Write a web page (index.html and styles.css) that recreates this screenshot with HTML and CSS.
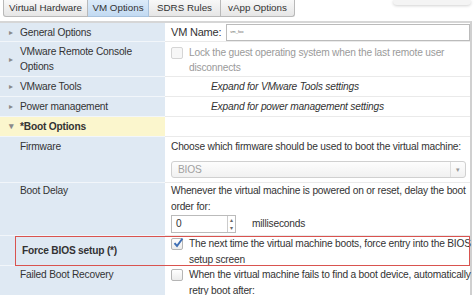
FILE: index.html
```html
<!DOCTYPE html>
<html lang="en">
<head>
    <meta charset="UTF-8">
    <title>VM Options</title>
    <link rel="stylesheet" href="styles.css">
</head>
<body>
    <div class="topbar">
        <div class="tabs">
            <div class="tab hw">Virtual Hardware</div>
            <div class="tab vm active">VM Options</div>
            <div class="tab sdrs">SDRS Rules</div>
            <div class="tab vapp">vApp Options</div>
        </div>
        <div class="ghost-btn"></div>
    </div>

    <div class="options">
        <div class="row h19">
            <div class="label"><span class="arrow">&#9656;</span>General Options</div>
            <div class="value inline">
                <span class="vm-label">VM Name:</span>
                <div class="text-input"><span class="tiny">vm_foo</span></div>
            </div>
        </div>

        <div class="row h35">
            <div class="label"><span class="arrow">&#9656;</span>VMware Remote Console<br>Options</div>
            <div class="value check-row disabled">
                <span class="checkbox"></span>
                <span>Lock the guest operating system when the last remote user<br>disconnects</span>
            </div>
        </div>

        <div class="row h20">
            <div class="label"><span class="arrow">&#9656;</span>VMware Tools</div>
            <div class="value hint">Expand for VMware Tools settings</div>
        </div>

        <div class="row h20">
            <div class="label"><span class="arrow">&#9656;</span>Power management</div>
            <div class="value hint">Expand for power management settings</div>
        </div>

        <div class="row h20 section">
            <div class="label"><span class="arrow down">&#9662;</span>*Boot Options</div>
            <div class="value"></div>
        </div>

        <div class="row firmware">
            <div class="label sub">Firmware</div>
            <div class="value">
                <div class="line">Choose which firmware should be used to boot the virtual machine:</div>
                <div class="select">
                    <span>BIOS</span>
                    <span class="caret">&#9662;</span>
                </div>
            </div>
        </div>

        <div class="row delay-row">
            <div class="label sub">Boot Delay</div>
            <div class="value">
                <div class="line">Whenever the virtual machine is powered on or reset, delay the boot<br>order for:</div>
                <div class="delay">
                    <div class="spin-input">
                        <span>0</span>
                        <div class="spinner">
                            <span>&#9652;</span>
                            <span>&#9662;</span>
                        </div>
                    </div>
                    <span>milliseconds</span>
                </div>
            </div>
        </div>

        <div class="row flagged">
            <div class="label sub strong">Force BIOS setup (*)</div>
            <div class="value check-row">
                <span class="checkbox checked">
                    <svg width="12" height="12" viewBox="0 0 12 12"><path d="M2.5 6.2 L5 9 L10.5 1.5" fill="none" stroke="#3f6fb5" stroke-width="2"/></svg>
                </span>
                <span>The next time the virtual machine boots, force entry into the BIOS<br>setup screen</span>
            </div>
        </div>

        <div class="row recovery">
            <div class="label sub">Failed Boot Recovery</div>
            <div class="value check-row">
                <span class="checkbox"></span>
                <span>When the virtual machine fails to find a boot device, automatically<br>retry boot after:</span>
            </div>
        </div>
    </div>
</body>
</html>
```

FILE: styles.css
```css
* {
    box-sizing: border-box;
}

body {
    margin: 0;
    font-family: 'Liberation Sans', Arial, sans-serif;
    font-size: 10.2px;
    letter-spacing: -0.2px;
    color: #333;
    background-color: #fff;
    overflow: hidden;
}

.topbar {
    display: flex;
    justify-content: space-between;
    height: 21px;
}

.tabs {
    display: flex;
    padding-left: 3px;
    height: 17px;
}

.tab {
    line-height: 16px;
    font-size: 9.8px;
    letter-spacing: 0;
    white-space: nowrap;
    text-align: center;
    border: 1px solid #b9b9b9;
    border-top: none;
    border-left: none;
    background: linear-gradient(#f8f8f8, #e6e6e6);
}

.hw {
    width: 85px;
    border-left: 1px solid #b9b9b9;
    border-radius: 0 0 0 3px;
}

.vm { width: 61px; }
.sdrs { width: 72px; }

.vapp {
    width: 74px;
    border-radius: 0 0 3px 0;
}

.tab.active {
    background: linear-gradient(#dcebf9, #c2daf2);
    border-color: #a9c3dd;
}

.ghost-btn {
    width: 78px;
    height: 5px;
    margin-right: 3px;
    background-color: #f4f4f4;
    border-radius: 0 0 4px 4px;
    box-shadow: 0 1px 3px rgba(0, 0, 0, 0.18);
}

.options {
    border-top: 2px solid #d6d6d6;
    border-right: 2px solid #d0d0d0;
    margin-right: 2px;
}

.row {
    display: flex;
    border-bottom: 1px solid #eaeaea;
    position: relative;
}

.label {
    width: 165px;
    flex-shrink: 0;
    padding: 0 0 0 20px;
    background-color: #dfe9f3;
    border-bottom: 1px solid #f2f6fa;
    margin-bottom: -1px;
    line-height: 15px;
    position: relative;
}

.arrow {
    position: absolute;
    left: 9px;
    font-size: 8px;
    color: #8a8a8a;
}

.arrow.down {
    font-size: 9px;
}

.h19 .label, .h20 .label, .h35 .label {
    display: flex;
    align-items: center;
}

.h19 { height: 19px; }
.h20 { height: 20px; }
.h35 { height: 35px; }

.section .label {
    background-color: #fbf6cd;
    font-weight: bold;
}

.sub {
    line-height: 16px;
}

.firmware .sub {
    padding-top: 2px;
}

.recovery .sub {
    padding-top: 1px;
}

.strong {
    font-weight: bold;
    padding-left: 22px;
    display: flex;
    align-items: center;
}

.value {
    flex: 1;
    padding: 0 0 0 6px;
    line-height: 16px;
    white-space: nowrap;
}

.firmware .value {
    padding-top: 2px;
}

.recovery .value {
    padding-top: 1px;
}

.value.inline {
    display: flex;
    align-items: center;
    padding: 0 0 0 6px;
    gap: 5px;
}

.vm-label {
    font-size: 11px;
}

.text-input {
    flex: 1;
    height: 17px;
    border: 1px solid #bbb;
    display: flex;
    align-items: center;
    padding-left: 3px;
}

.tiny {
    font-size: 4px;
    letter-spacing: 0;
    color: #666;
}

.hint {
    font-style: italic;
    padding-left: 46px;
    display: flex;
    align-items: center;
}

.check-row {
    display: flex;
    align-items: flex-start;
    gap: 6px;
}

.disabled {
    color: #9a9a9a;
    padding-top: 3px;
    line-height: 15px;
}

.checkbox {
    width: 12px;
    height: 12px;
    border: 1px solid #b5b5b5;
    border-radius: 2px;
    background: linear-gradient(#fff, #ececec);
    flex-shrink: 0;
    margin-top: 2px;
    position: relative;
}

.disabled .checkbox {
    border-color: #d5d5d5;
    background: #f7f7f7;
}

.checkbox svg {
    position: absolute;
    left: 0;
    top: -2px;
}

.select {
    margin: 6px 4px 4px 0;
    height: 17px;
    border: 1px solid #d0d0d0;
    border-radius: 3px;
    background: linear-gradient(#fdfdfd, #f1f1f1);
    display: flex;
    justify-content: space-between;
    align-items: center;
    padding-left: 6px;
    color: #a0a0a0;
}

.caret {
    width: 15px;
    height: 15px;
    border-left: 1px solid #ddd;
    text-align: center;
    font-size: 7px;
    color: #999;
    line-height: 15px;
}

.delay {
    display: flex;
    align-items: center;
    gap: 16px;
    margin-bottom: 2px;
}

.spin-input {
    width: 65px;
    height: 18px;
    border: 1px solid #bbb;
    display: flex;
    justify-content: space-between;
    align-items: center;
    padding-left: 4px;
}

.spinner {
    display: flex;
    flex-direction: column;
    width: 8px;
    height: 16px;
    border-left: 1px solid #ccc;
    font-size: 6px;
    line-height: 8px;
    color: #666;
    text-align: center;
}

.flagged {
    height: 30px;
}

.flagged::after {
    content: '';
    position: absolute;
    left: 15px;
    right: 0;
    top: 0;
    bottom: -1px;
    border: 1.5px solid #d9534f;
}
```
